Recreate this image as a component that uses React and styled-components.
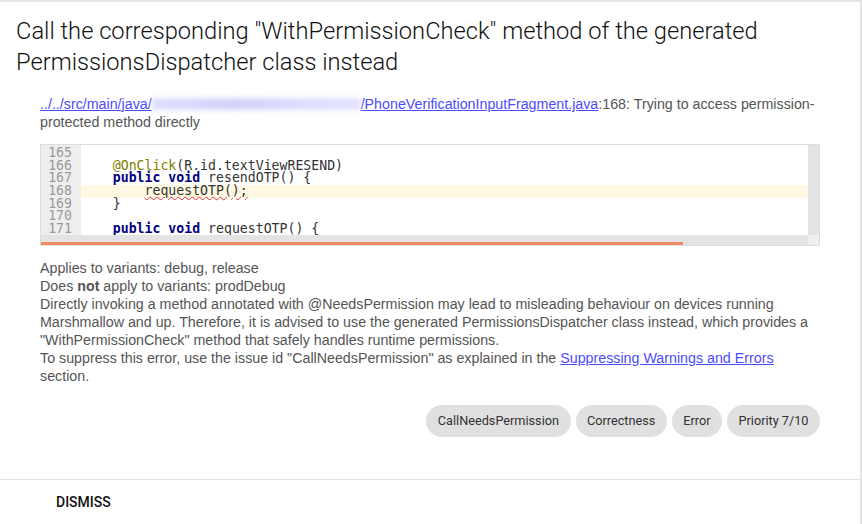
import React from "react";
import styled, { createGlobalStyle } from "styled-components";

const Global = createGlobalStyle`
  html, body { margin: 0; padding: 0; background: #fff; }
  body { width: 862px; height: 524px; overflow: hidden; }
`;

const Card = styled.div`
  width: 860px;
  height: 522px;
  border-top: 2px solid #e4e4e4;
  border-right: 2px solid #e4e4e4;
  display: flex;
  flex-direction: column;
  background: #fff;
  font-family: Roboto, "Liberation Sans", sans-serif;
`;

const Title = styled.h1`
  margin: 0;
  padding: 14px 16px 0 16px;
  font-family: Roboto, sans-serif;
  font-weight: 300;
  font-size: 23.7px;
  line-height: 31px;
  color: #111;
`;

const Body = styled.div`
  padding: 17px 40px 0 40px;
  font-family: "Liberation Sans", Arial, sans-serif;
  font-size: 14.25px;
  line-height: 18px;
  color: #555;
`;

const Link = styled.a`
  color: #4b4bff;
  text-decoration: underline;
`;

const Blur = styled.span`
  display: inline-block;
  width: 209px;
  height: 12px;
  vertical-align: -1px;
  background: linear-gradient(90deg, #d8d8ff, #c8c8fa 40%, #d5d5ff 70%, #dcdcff);
  filter: blur(2px);
  opacity: 0.8;
`;

const CodeBox = styled.div`
  margin-top: 13px;
  border: 1px solid #ddd;
  height: 100px;
  display: grid;
  grid-template-columns: 1fr 11px;
  grid-template-rows: 1fr 10px;
  background: #fff;
`;

const CodeArea = styled.div`
  display: flex;
  overflow: hidden;
`;

const Gutter = styled.div`
  width: 40px;
  background: #eee;
  color: #999;
  font-family: "DejaVu Sans Mono", monospace;
  font-size: 13.2px;
  line-height: 12.65px;
  padding-top: 2px;
  text-align: right;
  box-sizing: border-box;
  padding-right: 9px;
`;

const Lines = styled.div`
  flex: 1;
  font-family: "DejaVu Sans Mono", monospace;
  font-size: 13.2px;
  line-height: 12.65px;
  padding-top: 2px;
  color: #333;
  white-space: pre;
`;

const Line = styled.div`
  height: 12.65px;
  background: ${(p) => (p.$hl ? "#fff8e2" : "transparent")};
`;

const Ann = styled.span`
  color: #808000;
`;

const Kw = styled.span`
  color: #000080;
  font-weight: bold;
`;

const Squiggle = styled.span`
  text-decoration: underline wavy #e03030;
  text-decoration-thickness: 1px;
  text-underline-offset: 1px;
`;

const VScroll = styled.div`
  background: #e3e3e3;
`;

const HScroll = styled.div`
  background: #e3e3e3;
  position: relative;
`;

const Thumb = styled.div`
  position: absolute;
  left: 0;
  bottom: 0;
  height: 3px;
  background: #f08c64;
`;

const Corner = styled.div`
  background: #f0f0f0;
`;

const Desc = styled.div`
  margin-top: 13px;
`;

const Chips = styled.div`
  display: flex;
  justify-content: flex-end;
  gap: 5px;
  padding: 20px 40px 0 0;
`;

const Chip = styled.span`
  height: 32px;
  line-height: 32px;
  padding: 0 11.5px;
  border-radius: 16px;
  background: #e0e0e0;
  color: #333;
  font-family: Roboto, sans-serif;
  font-size: 12.7px;
`;

const Spacer = styled.div`
  flex: 1;
`;

const Footer = styled.div`
  border-top: 1px solid #e0e0e0;
  height: 44px;
  display: flex;
  align-items: center;
  padding-left: 56px;
`;

const Button = styled.span`
  font-family: Roboto, sans-serif;
  font-weight: 500;
  font-size: 14px;
  color: #111;
`;

export default function App() {
  return (
    <>
      <Global />
      <Card>
        <Title>
          Call the corresponding "WithPermissionCheck" method of the generated
          PermissionsDispatcher class instead
        </Title>
        <Body>
          <div>
            <Link>../../src/main/java/<Blur />/PhoneVerificationInputFragment.java</Link>
            :168: Trying to access permission-protected method directly
          </div>
          <CodeBox>
            <CodeArea>
              <Gutter>
                <div>165</div>
                <div>166</div>
                <div>167</div>
                <div>168</div>
                <div>169</div>
                <div>170</div>
                <div>171</div>
              </Gutter>
              <Lines>
                <Line> </Line>
                <Line>
                  {"    "}
                  <Ann>@OnClick</Ann>(R.id.textViewRESEND)
                </Line>
                <Line>
                  {"    "}
                  <Kw>public</Kw> <Kw>void</Kw> resendOTP() {"{"}
                </Line>
                <Line $hl>
                  {"        "}
                  <Squiggle>requestOTP();</Squiggle>
                </Line>
                <Line>{"    }"}</Line>
                <Line> </Line>
                <Line>
                  {"    "}
                  <Kw>public</Kw> <Kw>void</Kw> requestOTP() {"{"}
                </Line>
              </Lines>
            </CodeArea>
            <VScroll />
            <HScroll>
              <Thumb style={{ width: "642px" }} />
            </HScroll>
            <Corner />
          </CodeBox>
          <Desc>
            Applies to variants: debug, release
            <br />
            Does <b>not</b> apply to variants: prodDebug
            <br />
            Directly invoking a method annotated with @NeedsPermission may lead to
            misleading behaviour on devices running Marshmallow and up. Therefore,
            it is advised to use the generated PermissionsDispatcher class instead,
            which provides a "WithPermissionCheck" method that safely handles
            runtime permissions.
            <br />
            To suppress this error, use the issue id "CallNeedsPermission" as
            explained in the <Link>Suppressing Warnings and Errors</Link> section.
          </Desc>
        </Body>
        <Chips>
          <Chip>CallNeedsPermission</Chip>
          <Chip>Correctness</Chip>
          <Chip>Error</Chip>
          <Chip>Priority 7/10</Chip>
        </Chips>
        <Spacer />
        <Footer>
          <Button>DISMISS</Button>
        </Footer>
      </Card>
    </>
  );
}
